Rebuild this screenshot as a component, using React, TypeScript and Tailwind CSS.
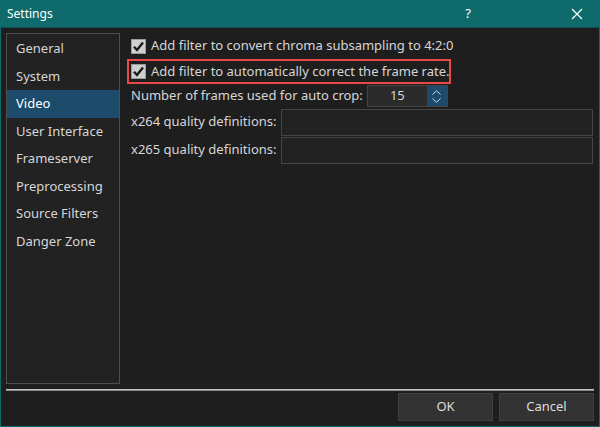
import React from "react";

const navItems = [
  "General",
  "System",
  "Video",
  "User Interface",
  "Frameserver",
  "Preprocessing",
  "Source Filters",
  "Danger Zone",
];

const font = { fontFamily: '"Noto Sans", "Open Sans", sans-serif' };

const Check: React.FC = () => (
  <div className="w-[15px] h-[15px] bg-[#cfcfcf] border border-[#9a9a9a] flex items-center justify-center shrink-0">
    <svg width="13" height="13" viewBox="0 0 13 13">
      <path d="M2 6.8 L5 10 L11 2.5" fill="none" stroke="#1a1a1a" strokeWidth="2.4" />
    </svg>
  </div>
);

export default function App() {
  return (
    <div
      className="w-[600px] h-[427px] bg-[#1e1e1e] border-x border-b border-[#0f6b6b] flex flex-col text-[#d6d6d6] overflow-hidden whitespace-nowrap"
      style={font}
    >
      <div className="h-[28px] bg-[#0f6b6b] border-b border-[#0b4f4f] flex items-center pl-[6px] text-white text-[12px] shrink-0">
        <span>Settings</span>
        <span className="ml-auto mr-[100px] text-[13px]">?</span>
        <svg width="12" height="12" viewBox="0 0 12 12" className="mr-[16px]">
          <path d="M1 1 L11 11 M11 1 L1 11" stroke="#fff" strokeWidth="1.2" />
        </svg>
      </div>

      <div className="flex flex-1 pl-[5px] pr-[6px] pt-[5px]">
        <div className="w-[114px] h-[351px] bg-[#222] border border-[#4e4e4e] pt-[1px] shrink-0">
          {navItems.map((item) => (
            <div
              key={item}
              className={`h-[27.5px] flex items-center pl-[9px] text-[13px] ${
                item === "Video" ? "bg-[#1c4b6c] text-white" : ""
              }`}
            >
              {item}
            </div>
          ))}
        </div>

        <div className="flex-1 pl-[7px] pt-[1px] text-[13px]">
          <div className="flex items-center gap-[5px] h-[24px] pl-[4px]">
            <Check />
            <span>Add filter to convert chroma subsampling to 4:2:0</span>
          </div>
          <div className="flex items-center gap-[5px] h-[25px] pl-[2px] w-[324px] border-2 border-[#e84a4a] mt-[1px]">
            <Check />
            <span>Add filter to automatically correct the frame rate.</span>
          </div>
          <div className="flex items-center h-[24px] pl-[4px]">
            <span>Number of frames used for auto crop:</span>
            <div className="ml-[4px] w-[81px] h-[22px] flex border border-[#444] bg-[#2b2b2b]">
              <div className="flex-1 flex items-center justify-center">15</div>
              <div className="w-[20px] bg-[#1c4b6c] flex flex-col items-center justify-center gap-[3px]">
                <svg width="9" height="5" viewBox="0 0 9 5">
                  <path d="M0.5 4.5 L4.5 0.8 L8.5 4.5" fill="none" stroke="#cfd8e0" strokeWidth="1" />
                </svg>
                <svg width="9" height="5" viewBox="0 0 9 5">
                  <path d="M0.5 0.5 L4.5 4.2 L8.5 0.5" fill="none" stroke="#cfd8e0" strokeWidth="1" />
                </svg>
              </div>
            </div>
          </div>
          <div className="flex items-center h-[28px] pl-[4px]">
            <span className="w-[150px]">x264 quality definitions:</span>
            <div className="w-[312px] h-[27px] bg-[#222] border border-[#454545]" />
          </div>
          <div className="flex items-center h-[28px] pl-[4px]">
            <span className="w-[150px]">x265 quality definitions:</span>
            <div className="w-[312px] h-[27px] bg-[#222] border border-[#454545]" />
          </div>
        </div>
      </div>

      <div className="mx-[5px] mb-[2px] h-[2px] bg-[#c4c4c4] border-b border-[#8a8a8a]" />
      <div className="flex justify-end gap-[6px] pr-[5px] pb-[5px]">
        <button className="w-[95px] h-[28px] bg-[#333] border border-[#3f3f3f] text-[13px] text-[#dcdcdc]">
          OK
        </button>
        <button className="w-[95px] h-[28px] bg-[#333] border border-[#3f3f3f] text-[13px] text-[#dcdcdc]">
          Cancel
        </button>
      </div>
    </div>
  );
}
